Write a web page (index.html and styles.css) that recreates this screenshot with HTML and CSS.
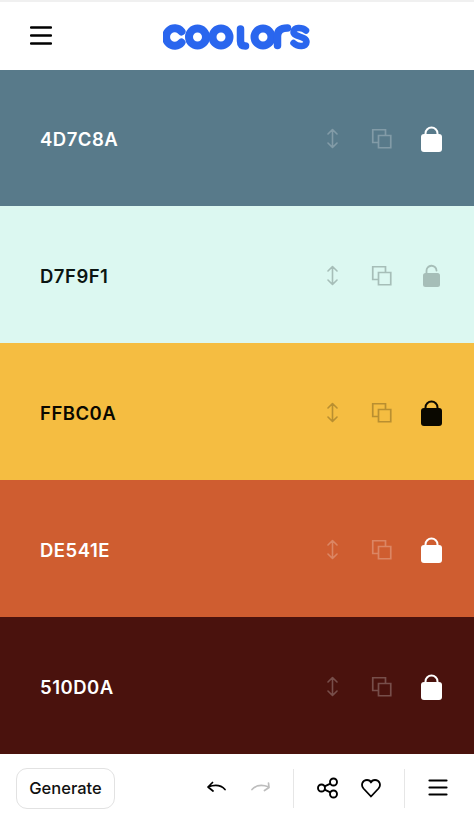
FILE: index.html
```html
<!DOCTYPE html>
<html lang="en">
<head>
<meta charset="utf-8">
<title>Coolors</title>
<link rel="stylesheet" href="styles.css">
</head>
<body>
<svg class="defs" width="0" height="0" aria-hidden="true">
  <symbol id="swap" viewBox="0 0 23 28"><path d="M12.500 5v17M8 9l4.500-4.500L17 9M8 18l4.500 4.500L17 18" fill="none" stroke="currentColor" stroke-width="1.600" stroke-linecap="round" stroke-linejoin="round"/></symbol>
  <symbol id="copy" viewBox="0 0 23 28"><path d="M8.500 17.500H2.750V4.750H15.500V10.500M8.500 10.500h12.250v12.250H8.500z" fill="none" stroke="currentColor" stroke-width="1.700"/></symbol>
  <symbol id="lock" viewBox="0 0 23 28"><path d="M5.500 11V8.500a6 6 0 0 1 12 0V11" fill="none" stroke="currentColor" stroke-width="2"/><rect x="1" y="9" width="21" height="18" rx="3" fill="currentColor"/></symbol>
  <symbol id="unlock" viewBox="0 0 23 28"><path d="M6.500 12V9a5 5 0 0 1 10-.5" fill="none" stroke="currentColor" stroke-width="1.800" stroke-linecap="round"/><rect x="3" y="11" width="17" height="14" rx="2.500" fill="currentColor"/></symbol>
</svg>
<div class="app">
  <header class="topbar">
    <button class="plain menu-top" aria-label="Menu">
      <svg width="22" height="20" viewBox="0 0 22 20"><path d="M1 1.500h20M1 9.500h20M1 17.500h20" stroke="#000" stroke-width="2.400" stroke-linecap="round"/></svg>
    </button>
    <svg class="logo" role="img" aria-label="coolors" width="148" height="26" viewBox="0 0 148 26">
      <g fill="none" stroke="#2a66ee" stroke-width="8" stroke-linecap="round">
        <path d="M18.500 7.500A8.700 8.700 0 1 0 18.500 18.500"/>
        <circle cx="34.500" cy="13" r="8.500"/>
        <circle cx="58" cy="13" r="8.500"/>
        <path d="M77.500 5v12q0 5 5 5" stroke-width="7.500"/>
        <circle cx="100" cy="13" r="8.500"/>
        <path d="M114.500 21.500V12q0-8 10-8" stroke-width="7.500"/>
        <path d="M143 6.500C139 3 130.500 3 130.500 8 130.500 13 143.500 12 143.500 18 143.500 23 135 23.500 130.500 19" stroke-width="6.500"/>
      </g>
    </svg>
  </header>
  <main class="palette">
    <section class="swatch s1">
      <span class="hex">4D7C8A</span>
      <div class="tools">
        <svg class="ico faint"><use href="#swap"/></svg>
        <svg class="ico faint"><use href="#copy"/></svg>
        <svg class="ico"><use href="#lock"/></svg>
      </div>
    </section>
    <section class="swatch s2">
      <span class="hex">D7F9F1</span>
      <div class="tools">
        <svg class="ico faint"><use href="#swap"/></svg>
        <svg class="ico faint"><use href="#copy"/></svg>
        <svg class="ico faint"><use href="#unlock"/></svg>
      </div>
    </section>
    <section class="swatch s3">
      <span class="hex">FFBC0A</span>
      <div class="tools">
        <svg class="ico faint"><use href="#swap"/></svg>
        <svg class="ico faint"><use href="#copy"/></svg>
        <svg class="ico"><use href="#lock"/></svg>
      </div>
    </section>
    <section class="swatch s4">
      <span class="hex">DE541E</span>
      <div class="tools">
        <svg class="ico faint"><use href="#swap"/></svg>
        <svg class="ico faint"><use href="#copy"/></svg>
        <svg class="ico"><use href="#lock"/></svg>
      </div>
    </section>
    <section class="swatch s5">
      <span class="hex">510D0A</span>
      <div class="tools">
        <svg class="ico faint"><use href="#swap"/></svg>
        <svg class="ico faint"><use href="#copy"/></svg>
        <svg class="ico"><use href="#lock"/></svg>
      </div>
    </section>
  </main>
  <footer class="bottombar">
    <button class="generate">Generate</button>
    <div class="history">
      <svg width="20" height="14" viewBox="0 0 20 14"><path d="M19 8.500C15 4 9 3.500 2 6M6.500 1.500 2 6l5 4" fill="none" stroke="#000" stroke-width="1.700" stroke-linecap="round" stroke-linejoin="round"/></svg>
      <svg width="20" height="14" viewBox="0 0 20 14"><path d="M1 8.500C5 4 11 3.500 18 6M17.500 2 18 6.500l-4.500 3" fill="none" stroke="#bdbdbd" stroke-width="1.700" stroke-linecap="round" stroke-linejoin="round"/></svg>
    </div>
    <div class="actions">
      <svg width="22" height="22" viewBox="0 0 22 22"><g fill="none" stroke="#000" stroke-width="1.900"><circle cx="4.500" cy="11" r="3.500"/><circle cx="16.500" cy="5" r="3.500"/><circle cx="16.500" cy="17" r="3.500"/><path d="M7.600 9.400l5.800-2.800M7.600 12.600l5.800 2.800"/></g></svg>
      <svg width="20" height="20" viewBox="0 0 20 20"><path d="M10 18.500 2.500 10.500C-.5 7 1.500 2 6 2 8 2 9.500 3 10 4.500 10.500 3 12 2 14 2 18.500 2 20.500 7 17.500 10.500z" fill="none" stroke="#000" stroke-width="1.800" stroke-linejoin="round"/></svg>
    </div>
    <div class="more">
      <svg width="20" height="18" viewBox="0 0 20 18"><path d="M1.500 1.500h17M1.500 8.500h17M1.500 15.500h17" stroke="#000" stroke-width="2.200" stroke-linecap="round"/></svg>
    </div>
  </footer>
</div>
</body>
</html>
```

FILE: styles.css
```css
* { box-sizing: border-box; }
html, body { margin: 0; height: 100%; }
body {
  background: #fff;
  font-family: Inter, "Liberation Sans", sans-serif;
  overflow: hidden;
}
.defs { position: absolute; }
.app {
  width: 474px;
  height: 815px;
  display: flex;
  flex-direction: column;
}
.topbar {
  height: 70px;
  flex: none;
  display: flex;
  align-items: center;
  justify-content: center;
  position: relative;
  padding-top: 2px;
  background: #fff;
  border-top: 2px solid #f0f0f0;
}
.plain { border: 0; background: none; padding: 0; display: flex; }
.menu-top { position: absolute; left: 30px; top: 24px; }
.logo { display: block; }
.palette { flex: none; display: flex; flex-direction: column; }
.swatch {
  height: 137px;
  display: flex;
  align-items: center;
  justify-content: space-between;
  padding: 2px 31px 0 40px;
}
.s1 { background: #587a8a; color: #fff; height: 136px; }
.s2 { background: #dcf8f1; color: #0b1512; }
.s3 { background: #f5bd41; color: #0a0800; }
.s4 { background: #cf5d30; color: #fff; }
.s5 { background: #4a120d; color: #fff; }
.hex { font-size: 18.500px; font-weight: 600; letter-spacing: .5px; }
.tools { display: flex; align-items: center; gap: 27px; }
.ico { width: 23px; height: 28px; display: block; }
.faint { opacity: .25; }
.bottombar {
  flex: 1;
  display: flex;
  align-items: center;
  padding: 7px 0 0 16px;
}
.generate {
  flex: none;
  width: 99px;
  height: 41px;
  border: 1.500px solid #e2e2e2;
  border-radius: 11px;
  background: #fff;
  font: 500 16.500px Inter, "Liberation Sans", sans-serif;
  color: #111;
  padding: 0;
}
.history { flex: none; display: flex; gap: 25px; margin-left: 91px; width: 87px; }
.actions {
  flex: none;
  display: flex;
  align-items: center;
  gap: 22px;
  height: 39px;
  padding: 0 23px;
  border-left: 1px solid #e6e6e6;
  border-right: 1px solid #e6e6e6;
}
.more { flex: none; display: flex; margin-left: 23px; }
```
